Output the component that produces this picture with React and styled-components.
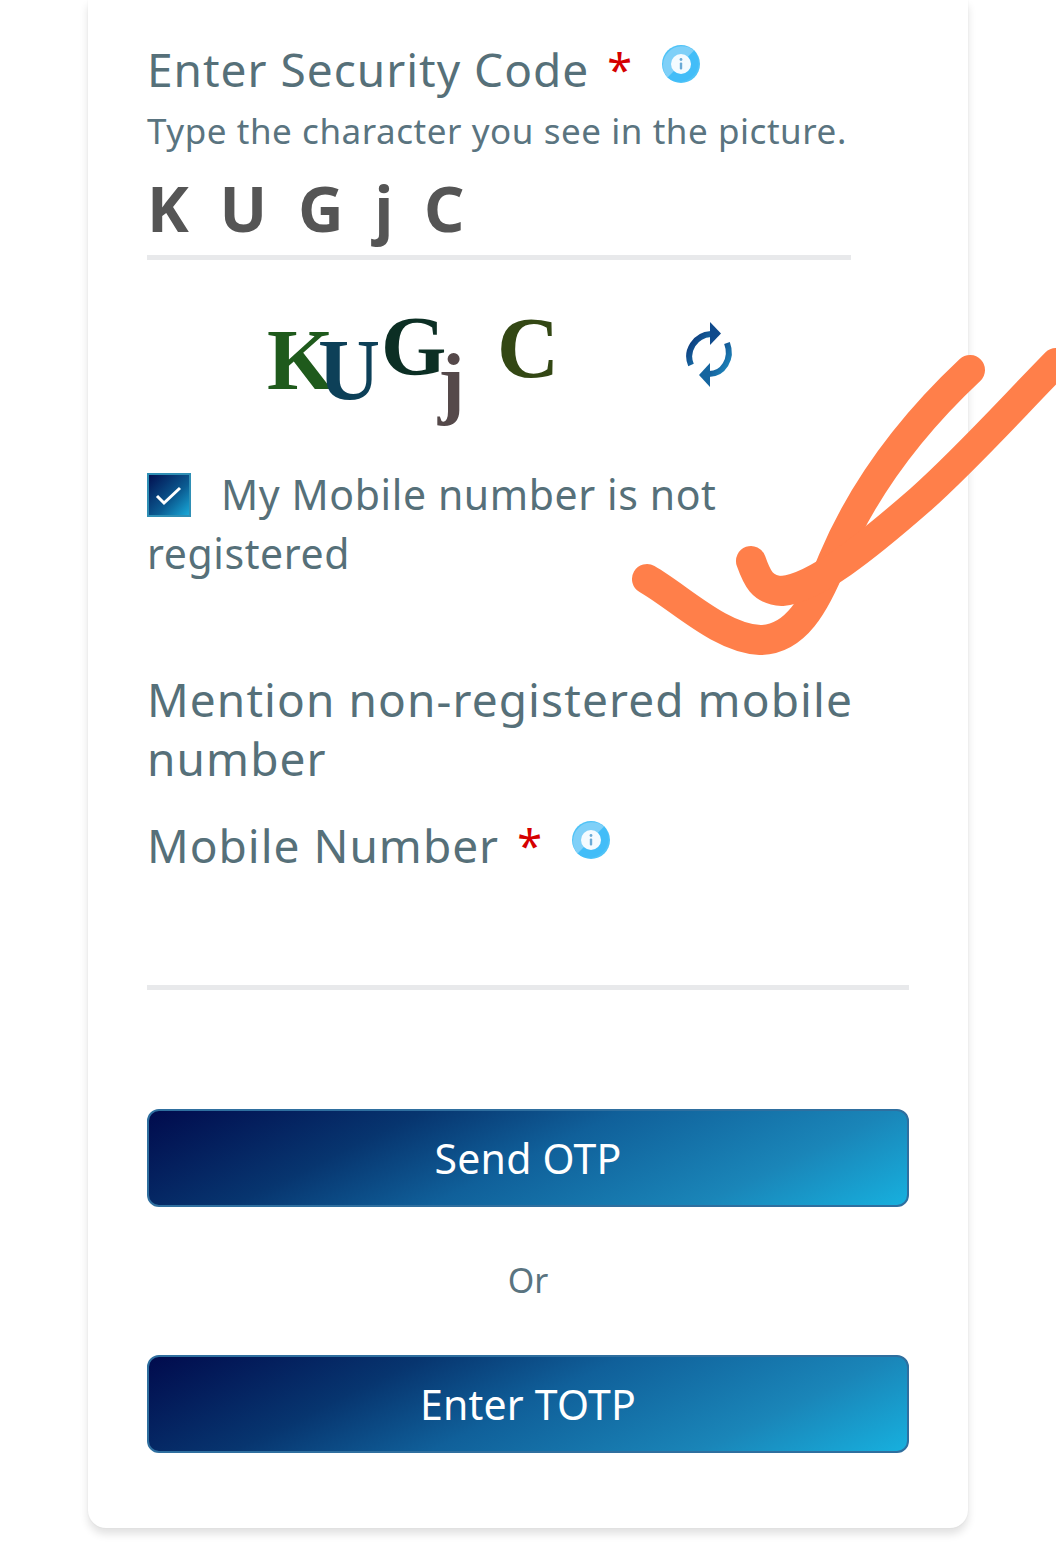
import React from 'react';
import styled, { createGlobalStyle } from 'styled-components';

const GlobalStyle = createGlobalStyle`
  html, body {
    margin: 0;
    padding: 0;
    background: #fff;
    font-family: "Noto Sans", "Open Sans", sans-serif;
  }
`;

const Page = styled.div`
  position: relative;
  width: 1056px;
  height: 1548px;
  overflow: hidden;
  background: #fff;
`;

const Card = styled.div`
  box-sizing: border-box;
  width: 880px;
  height: 1528px;
  margin: 0 0 0 88px;
  padding: 39px 59px 0;
  background: #fff;
  border-radius: 0 0 18px 18px;
  box-shadow: 0 6px 8px rgba(0, 0, 0, 0.12), 0 0 2px rgba(0, 0, 0, 0.06);
`;

const Label = styled.div`
  display: flex;
  align-items: flex-start;
  height: 62px;
  font-size: 46px;
  line-height: 61px;
  letter-spacing: 1px;
  color: #567079;
`;

const Star = styled.span`
  margin-left: 18px;
  color: #d50000;
  font-size: 45px;
`;

const InfoWrap = styled.span`
  display: flex;
  margin: 5px 0 0 28px;
`;

const Hint = styled.div`
  margin-top: 0;
  font-size: 35px;
  line-height: 60px;
  letter-spacing: 0.55px;
  color: #5a7480;
`;

const CodeField = styled.div`
  width: 704px;
  height: 94px;
  font-size: 63px;
  font-weight: 700;
  line-height: 94px;
  letter-spacing: 5.2px;
  word-spacing: 4px;
  color: #555;
  border-bottom: 5px solid #e8e9eb;
`;

const CaptchaRow = styled.div`
  display: flex;
  align-items: center;
  height: 140px;
  margin-top: 30px;
  padding-left: 95px;
`;

const RefreshWrap = styled.span`
  display: flex;
  margin: -12px 0 0 113px;
`;

const CheckRow = styled.div`
  margin-top: 35px;
  width: 720px;
  font-size: 41px;
  line-height: 59px;
  letter-spacing: 0.6px;
  color: #567079;
`;

const Box = styled.span`
  display: inline-flex;
  align-items: center;
  justify-content: center;
  box-sizing: border-box;
  width: 44px;
  height: 44px;
  margin-right: 30px;
  vertical-align: 0;
  border: 2px solid #2f8fb5;
  background: linear-gradient(135deg, #021050 0%, #0b5c92 60%, #18a8d8 100%);
`;

const Heading = styled.div`
  margin-top: 87px;
  width: 740px;
  font-size: 46px;
  line-height: 59px;
  letter-spacing: 1.1px;
  color: #567079;
`;

const MobileLabel = styled(Label)`
  margin-top: 27px;
`;

const MobileField = styled.div`
  height: 108px;
  border-bottom: 5px solid #e8e9eb;
`;

const ActionButton = styled.div`
  display: flex;
  align-items: center;
  justify-content: center;
  box-sizing: border-box;
  width: 762px;
  height: 98px;
  margin-top: ${(p) => p.$top}px;
  color: #fff;
  font-size: 41px;
  letter-spacing: 0.2px;
  border: 2px solid #2f6f9f;
  border-radius: 12px;
  background: linear-gradient(154deg, #010b4d 0%, #07356f 29%, #10609a 50%, #1a85b8 78%, #17b0de 100%);
`;

const OrText = styled.div`
  margin-top: 48px;
  height: 50px;
  text-align: center;
  font-size: 34px;
  line-height: 50px;
  color: #5a7480;
`;

const Scribble = styled.svg`
  position: absolute;
  left: 620px;
  top: 340px;
`;

const InfoIcon = () => (
  <svg width="40" height="40" viewBox="0 0 40 40">
    <circle cx="20" cy="20" r="19" fill="#4fc3f7" />
    <path d="M33 6.5A19 19 0 0 1 6.5 33.5L33 6.5Z" fill="#42bdf8" />
    <path d="M6.5 33.5A19 19 0 0 1 33 6.5Z" fill="#7fd0f8" />
    <circle cx="20" cy="20" r="10" fill="#f4fbff" />
    <circle cx="20" cy="15.500" r="1.4" fill="#6aaad6" />
    <rect x="18.8" y="18.5" width="2.4" height="7" rx="1" fill="#6aaad6" />
  </svg>
);

const CaptchaImage = () => (
  <svg width="330" height="140" viewBox="0 0 330 140">
    <g fontFamily="'Liberation Serif', serif" fontWeight="700" fontSize="86">
      <text x="25" y="99" fill="#1f5a1c">K</text>
      <text x="76" y="109" fill="#0d4058">U</text>
      <text x="139" y="85" fontSize="84" fill="#0c2f24">G</text>
      <text x="196" y="119" fontSize="80" fill="#55494a">j</text>
      <text x="255" y="87" fill="#334714">C</text>
    </g>
  </svg>
);

const RefreshIcon = () => (
  <svg width="50" height="66" viewBox="0 0 50 66">
    <defs>
      <linearGradient id="refreshFill" x1="0" y1="0" x2="1" y2="1">
        <stop offset="0" stopColor="#0a2f72" />
        <stop offset="1" stopColor="#1f8fc4" />
      </linearGradient>
    </defs>
    <g fill="none" stroke="url(#refreshFill)" strokeWidth="6">
      <path d="M6 44C0 30 10 14 26 13" />
      <path d="M42 22C48 38 38 53 24 53" />
    </g>
    <path d="M25 1L36 12.500L25 24Z" fill="#0f4a8c" />
    <path d="M25 42L14 54L25 66Z" fill="#15659f" />
  </svg>
);

const CheckMark = () => (
  <Scribble width="436" height="330" viewBox="620 340 436 330">
    <g fill="none" stroke="#ff7f4a" strokeWidth="30" strokeLinecap="round" strokeLinejoin="round">
      <path d="M647 579C680 598 720 638 760 640C795 640 815 605 833 560C852 515 890 445 970 370" />
      <path d="M751 561C757 578 762 590 782 591C815 588 865 548 920 500C965 460 1010 410 1056 363" />
    </g>
  </Scribble>
);

export default function App() {
  return (
    <Page>
      <GlobalStyle />
      <Card>
        <Label>
          Enter Security Code
          <Star>*</Star>
          <InfoWrap><InfoIcon /></InfoWrap>
        </Label>
        <Hint>Type the character you see in the picture.</Hint>
        <CodeField>K U G j C</CodeField>
        <CaptchaRow>
          <CaptchaImage />
          <RefreshWrap><RefreshIcon /></RefreshWrap>
        </CaptchaRow>
        <CheckRow>
          <Box>
            <svg width="30" height="30" viewBox="0 0 30 30" fill="none" stroke="#fff" strokeWidth="3">
              <path d="M3 16L10 23L26 8" />
            </svg>
          </Box>
          My Mobile number is not registered
        </CheckRow>
        <Heading>Mention non-registered mobile number</Heading>
        <MobileLabel>
          Mobile Number
          <Star>*</Star>
          <InfoWrap><InfoIcon /></InfoWrap>
        </MobileLabel>
        <MobileField />
        <ActionButton $top={119}>Send OTP</ActionButton>
        <OrText>Or</OrText>
        <ActionButton $top={50}>Enter TOTP</ActionButton>
      </Card>
      <CheckMark />
    </Page>
  );
}
